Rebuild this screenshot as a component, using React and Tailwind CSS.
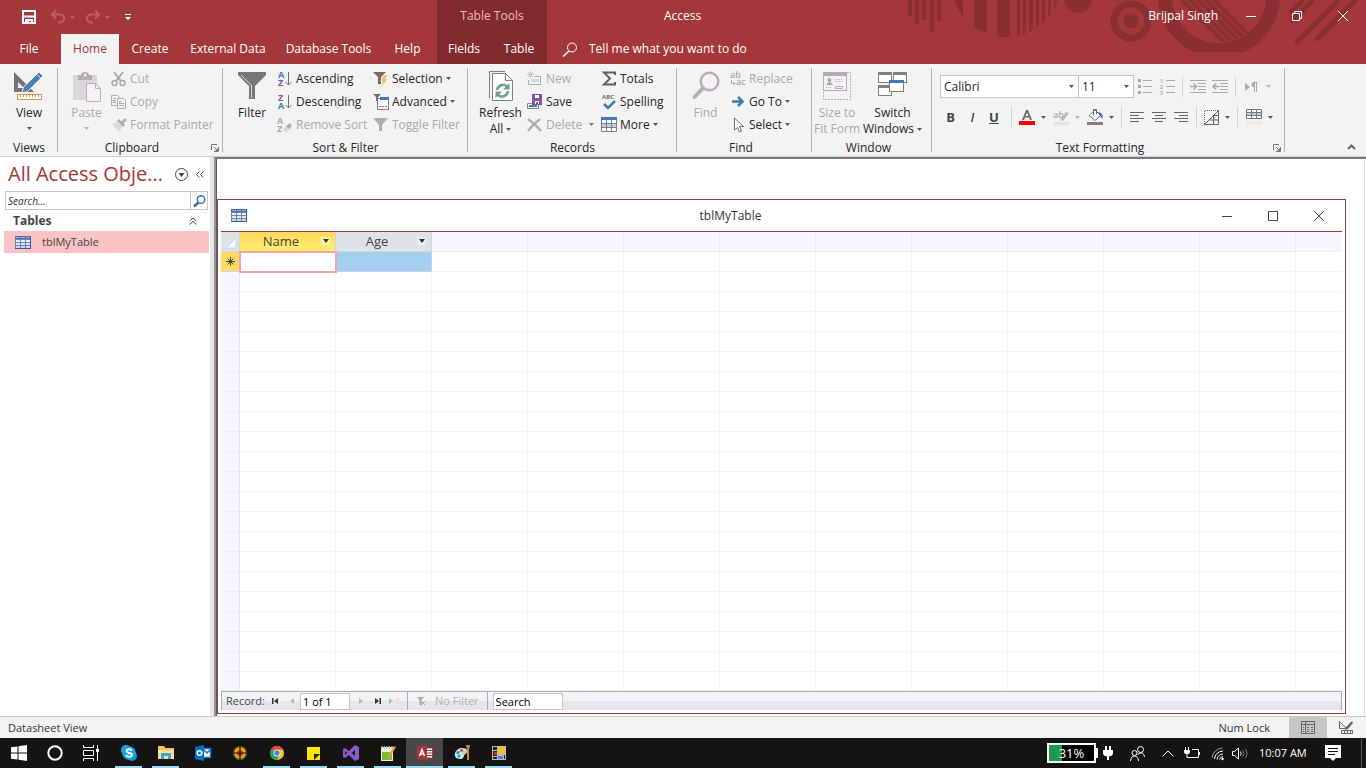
import React from "react";

const S = ({ w = 16, h = 16, children, className = "" }) => (
  <svg width={w} height={h} viewBox={`0 0 ${w} ${h}`} fill="none" aria-hidden="true" className={`block shrink-0 overflow-visible ${className}`}>
    {children}
  </svg>
);

const Caret = ({ color = "#555" }) => (
  <S w={5} h={3}><path d="M0 0h5L2.500 3z" fill={color} /></S>
);

const TableGlyph = () => (
  <S w={16} h={13}>
    <rect width="16" height="13" fill="#6f86b3" />
    <rect width="16" height="3" fill="#4f6ca6" />
    <path d="M1 1h4v1H1zM6 1h4v1H6zM11 1h4v1h-4z" fill="#9db2da" />
    <path d="M1 4h4v2H1zM6 4h4v2H6zM11 4h4v2h-4z" fill="#eef3fb" />
    <path d="M1 7h4v2H1zM6 7h4v2H6zM11 7h4v2h-4z" fill="#dde6f5" />
    <path d="M1 10h4v2H1zM6 10h4v2H6zM11 10h4v2h-4z" fill="#c9d6ee" />
    <path d="M15.500 0v13M0 12.500h16" stroke="#3f5787" />
  </S>
);

/* ---------- ribbon building blocks ---------- */

function Group({ label, className = "", labelClass = "", launcher, children }) {
  return (
    <section aria-label={label} className={`relative flex shrink-0 flex-col ${className}`}>
      <div className="flex h-[73px] items-start">{children}</div>
      <div className={`h-4 text-center leading-4 ${launcher ? "pr-[17px]" : labelClass}`}>{label}</div>
      {launcher && (
        <button type="button" aria-label={`${label} options`} className="absolute right-[4px] bottom-[4px]">
          <S w={8} h={8}>
            <path d="M.5 6V.5H6" stroke="#777" />
            <path d="M3 3l3 3" stroke="#777" />
            <path d="M7.500 3v4.500H3" stroke="#777" />
            <path d="M7 4v3H4z" fill="#777" />
          </S>
        </button>
      )}
      <span className="absolute top-[1px] right-0 h-[84px] w-px bg-[#b4b4b4]" />
    </section>
  );
}

function Small({ icon, label, disabled, caret, gap }) {
  return (
    <button type="button" disabled={disabled} className={`flex h-[23px] items-center gap-[3px] whitespace-nowrap ${disabled ? "text-[#a9a9a9]" : ""}`}>
      {icon}
      <span>{label}</span>
      {caret && <span className={gap || ""}><Caret color={caret} /></span>}
    </button>
  );
}

function Big({ icon, lines, disabled, caret, inline, className }) {
  return (
    <button type="button" disabled={disabled} className={`flex shrink-0 flex-col items-center whitespace-nowrap leading-4 ${disabled ? "text-[#a9a9a9]" : ""} ${className}`}>
      <span className="flex h-[38px] items-start pt-[4px]">{icon}</span>
      {lines.map((l, i) => (
        <span key={l} className="flex items-center gap-[3px]">
          {l}
          {inline && i === lines.length - 1 && <Caret />}
        </span>
      ))}
      {caret && <span className="pt-[6px]"><Caret color={caret} /></span>}
    </button>
  );
}

const Divider = () => <span className="mx-[7px] h-5 w-px shrink-0 bg-[#d2d2d2]" />;

/* ---------- ribbon icons ---------- */

const ViewIcon = () => (
  <S w={30} h={30}>
    <path fillRule="evenodd" d="M0 1l20 20H0zM4 11v6h6z" fill="#737373" />
    <path d="M8 22l1.500-6L25 1l4 4-15.500 15.500z" fill="#4a7ebb" stroke="#f3f3f3" />
    <path d="M23 3.500l3.500 3.500" stroke="#f3f3f3" />
    <rect x="3.500" y="23.500" width="24" height="5" fill="#fff" stroke="#e0914a" />
    <path d="M6.500 24v2M9.500 24v2M12.500 24v2M15.500 24v2M18.500 24v2M21.500 24v2M24.500 24v2" stroke="#e0914a" />
  </S>
);
const PasteIcon = () => (
  <S w={28} h={31}>
    <rect y="4" width="24" height="25" fill="#dbd6db" />
    <path d="M5 4h3a4 3 0 018 0h3v5H5z" fill="#b1adb1" />
    <circle cx="12" cy="4" r="1.500" fill="#f3f3f3" />
    <path d="M13.500 12.500h9l5 5v13h-14z" fill="#f7f1f8" stroke="#b5b1b5" />
    <path d="M22.500 12.500v5h5" stroke="#b5b1b5" />
  </S>
);
const FilterBig = () => (
  <S w={28} h={29}>
    <path d="M0 1h28v3L17 15v13h-6V15L0 4z" fill="#767676" />
    <path d="M3 4l10.500 10.500v12" stroke="#d8d8d8" />
  </S>
);
const RefreshIcon = () => (
  <S w={24} h={30}>
    <path d="M.5 27V.5H16" stroke="#808080" />
    <path d="M3.500 2.500h13l7 7v20h-20z" fill="#fff" stroke="#808080" />
    <path d="M16.500 2.500v7h7" stroke="#808080" />
    <path d="M8 19a6 6 0 0110-3.500M19 20a6 6 0 01-10 4" stroke="#68a58b" strokeWidth="2.500" />
    <path d="M20.500 12v6.500H14zM6.500 27v-6.500H13z" fill="#68a58b" />
  </S>
);
const FindIcon = () => (
  <S w={28} h={29}>
    <circle cx="17.500" cy="10.500" r="8.800" fill="#f7f2f7" stroke="#b3b0b3" strokeWidth="2.400" />
    <path d="M11 17L2.500 26" stroke="#b3b0b3" strokeWidth="4" strokeLinecap="round" />
  </S>
);
const SizeIcon = () => (
  <S w={28} h={30}>
    <path d="M24 1.500h3.500v27H.5V21" stroke="#b7b3b7" strokeDasharray="2 1" />
    <rect x=".5" y="1.500" width="23" height="18" fill="#f6f0f7" stroke="#b1adb1" />
    <path d="M0 1h24v4H0z" fill="#b1adb1" />
    <circle cx="6.500" cy="9" r="2" fill="#aaa" />
    <path d="M3 14q3.500-6 7 0z" fill="#aaa" />
    <path d="M12 8.500h8M12 10.500h8M3 16.500h6" stroke="#b7b3b7" strokeDasharray="1 1" />
    <path d="M12.500 15.500h7v2h-7z" stroke="#b1adb1" />
  </S>
);
const SwitchIcon = () => (
  <S w={29} h={27}>
    <rect x=".5" y="1.500" width="13" height="10" fill="#fff" stroke="#808080" /><path d="M0 1h14v3H0z" fill="#808080" />
    <rect x="15.500" y="1.500" width="13" height="10" fill="#fff" stroke="#808080" /><path d="M15 1h14v3H15z" fill="#808080" />
    <rect x=".5" y="14.500" width="13" height="10" fill="#fff" stroke="#808080" /><path d="M0 14h14v3H0z" fill="#808080" />
    <rect x="11.500" y="10.500" width="14" height="10" fill="#fff" stroke="#808080" /><path d="M11 9h15v3H11z" fill="#3f79bb" />
  </S>
);
const CutIcon = () => (
  <S>
    <path d="M3 1l7 9M12 1L5 10" stroke="#a9a9a9" strokeWidth="2" />
    <circle cx="3.500" cy="12" r="2.500" stroke="#a9a9a9" strokeWidth="1.500" />
    <circle cx="11.500" cy="12" r="2.500" stroke="#a9a9a9" strokeWidth="1.500" />
  </S>
);
const CopyIcon = () => (
  <S>
    <path d="M.5 1.500h6l2 2v8h-8z" fill="#f7f2f7" stroke="#b0adb0" />
    <path d="M2 4.500h3M2 6.500h3M2 8.500h3" stroke="#b0adb0" />
    <path d="M6.500 4.500h6l2 2v8h-8z" fill="#f7f2f7" stroke="#b0adb0" />
    <path d="M8 7.500h3M8 9.500h5M8 11.500h5" stroke="#b0adb0" />
  </S>
);
const PainterIcon = () => (
  <S>
    <path d="M1 7l5-2 5 5-3 5z" fill="#dcd8dc" />
    <path d="M6 4l2-2 6 6-2 2z" fill="#b0adb0" />
    <path d="M10 5l4-4 2 2-4 4z" fill="#b0adb0" />
  </S>
);
const SortIcon = ({ a, b, ca, cb }) => (
  <S>
    <text x="1" y="7" fontSize="9" fontWeight="700" fill={ca}>{a}</text>
    <text x="1" y="15" fontSize="9" fontWeight="700" fill={cb}>{b}</text>
    <path d="M11.500 1v13M8.500 11l3 3 3-3" stroke="#6d6d6d" />
  </S>
);
const RemoveSort = () => (
  <S>
    <text y="7" fontSize="9" fontWeight="700" fill="#a9a9a9">A</text>
    <text y="15" fontSize="9" fontWeight="700" fill="#a9a9a9">Z</text>
    <path d="M6 12l4-4 4 3-4 4H8z" fill="#dcd8dc" />
    <path d="M9 9l4-3 2 3-3 3z" fill="#b0adb0" />
  </S>
);
const SelectionIcon = () => (
  <S>
    <path d="M0 1h13L8 6v7H5V6z" fill="#6d6d6d" />
    <path d="M11 4h4l-3 4h3l-7 8 2-6H7z" fill="#e9bd7c" stroke="#f3f3f3" strokeWidth=".5" />
  </S>
);
const AdvancedIcon = () => (
  <S>
    <path d="M0 0h8L5 3v4H3V3z" fill="#6d6d6d" />
    <rect x="4.500" y="4.500" width="11" height="11" fill="#fff" stroke="#808080" />
    <path d="M7 3h9v3H7z" fill="#3f79bb" />
    <path d="M6 12.500h2m1 0h2m1 0h2" stroke="#808080" />
  </S>
);
const ToggleIcon = () => (
  <S><path d="M0 1h15L9 8v6H6V8z" fill="#b0adb0" /></S>
);
const NewIcon = () => (
  <S>
    <path d="M3.500 0v7M0 3.500h7M1 1l5 5M6 1L1 6" stroke="#c5c2c5" />
    <path d="M7 5.500h6.500v8H1.500V9" stroke="#b0adb0" />
    <path d="M4 8h8v3H4z" fill="#d8d4d8" />
  </S>
);
const SaveIcon = () => (
  <S>
    <path d="M.5 9.500h11v5H.5z" fill="#fff" stroke="#808080" /><path d="M2 11h8v2H2z" fill="#3f79bb" />
    <path d="M5 0h10v11H5z" fill="#8553a5" />
    <path d="M8 1h4v3H8zM8 7h4v3H8z" fill="#fff" /><path d="M9 8h2v2H9z" fill="#8553a5" />
  </S>
);
const DeleteIcon = () => (
  <S><path d="M1 2q7 5 13 12M13 2Q6 7 1 14" stroke="#b0adb0" strokeWidth="2.200" /></S>
);
const SigmaIcon = () => (
  <S><path d="M14 4V1.500H3L9 7.500 3 13.500h11V11" stroke="#5f5f5f" strokeWidth="2" /></S>
);
const SpellIcon = () => (
  <S>
    <text x="1" y="5" fontSize="6" fontWeight="700" fill="#6d6d6d">ABC</text>
    <path d="M3 10l4 4 7-7" stroke="#3f79bb" strokeWidth="2.500" />
  </S>
);
const GridIcon = () => (
  <S h={15}>
    <path d="M.5.5h15v14H.5z" fill="#fff" stroke="#808080" />
    <path d="M1 6h14v5H1z" fill="#bcd0e6" />
    <path d="M5.500 3v12M10.500 3v12M0 6.500h16M0 10.500h16" stroke="#808080" />
    <path d="M0 0h16v3H0z" fill="#3f79bb" />
  </S>
);
const ReplaceIcon = () => (
  <S>
    <text y="7" fontSize="9" fontWeight="600" fill="#a9a9a9">ab</text>
    <text x="6" y="14" fontSize="9" fontWeight="600" fill="#a9a9a9">ac</text>
    <path d="M1.500 9v3.500H5M3.500 11l1.500 1.500L3.500 14" stroke="#a9a9a9" />
  </S>
);
const GoToIcon = () => (
  <S><path d="M2 7.500h10M8 3l4.500 4.500L8 12" stroke="#3f79bb" strokeWidth="2.500" /></S>
);
const PointerIcon = () => (
  <S><path d="M4.500 1v12l3-2.500 2 4.500 2-1-2-4.500h4z" fill="#fff" stroke="#6d6d6d" /></S>
);

const AlignLines = ({ d }) => (
  <S w={15} h={13}><path d={d} stroke="#666" /></S>
);

function Ribbon() {
  const gray = "#a9a9a9";
  return (
    <div className="flex shrink-0 border-b border-[#d0d0d0] bg-[#f3f3f3] pt-[3px] text-[#262626]">
      <Group label="Views" className="w-[58px]">
        <Big className="w-[58px]" icon={<ViewIcon />} lines={["View"]} caret="#555" />
      </Group>
      <Group label="Clipboard" className="w-[165px]" launcher>
        <Big className="w-[53px] pl-[4px]" disabled icon={<PasteIcon />} lines={["Paste"]} caret="#b5b5b5" />
        <div className="flex flex-col">
          <Small disabled icon={<CutIcon />} label="Cut" />
          <Small disabled icon={<CopyIcon />} label="Copy" />
          <Small disabled icon={<PainterIcon />} label="Format Painter" />
        </div>
      </Group>
      <Group label="Sort & Filter" className="w-[245px]">
        <Big className="w-[54px] pl-[4px]" icon={<FilterBig />} lines={["Filter"]} />
        <div className="flex w-[96px] shrink-0 flex-col">
          <Small icon={<SortIcon a="A" b="Z" ca="#3f79bb" cb="#8553a5" />} label="Ascending" />
          <Small icon={<SortIcon a="Z" b="A" ca="#8553a5" cb="#3f79bb" />} label="Descending" />
          <Small disabled icon={<RemoveSort />} label="Remove Sort" />
        </div>
        <div className="flex flex-col">
          <Small icon={<SelectionIcon />} label="Selection" caret="#555" />
          <Small icon={<AdvancedIcon />} label="Advanced" caret="#555" />
          <Small disabled icon={<ToggleIcon />} label="Toggle Filter" />
        </div>
      </Group>
      <Group label="Records" className="w-[209px]">
        <Big className="w-[59px] pl-[6px]" inline icon={<RefreshIcon />} lines={["Refresh", "All"]} />
        <div className="flex w-[74px] shrink-0 flex-col">
          <Small disabled icon={<NewIcon />} label="New" />
          <Small icon={<SaveIcon />} label="Save" />
          <Small disabled icon={<DeleteIcon />} label="Delete" caret="#777" gap="pl-[4px]" />
        </div>
        <div className="flex flex-col">
          <Small icon={<SigmaIcon />} label="Totals" />
          <Small icon={<SpellIcon />} label="Spelling" />
          <Small icon={<GridIcon />} label="More" caret="#555" />
        </div>
      </Group>
      <Group label="Find" className="w-[135px]" labelClass="pr-[7px]">
        <Big className="w-[53px] pl-[4px]" disabled icon={<FindIcon />} lines={["Find"]} />
        <div className="flex flex-col">
          <Small disabled icon={<ReplaceIcon />} label="Replace" />
          <Small icon={<GoToIcon />} label="Go To" caret="#555" />
          <Small icon={<PointerIcon />} label="Select" caret="#555" />
        </div>
      </Group>
      <Group label="Window" className="w-[120px]" labelClass="pr-[7px]">
        <Big className="w-[50px]" disabled icon={<SizeIcon />} lines={["Size to", "Fit Form"]} />
        <Big className="w-[61px]" inline icon={<SwitchIcon />} lines={["Switch", "Windows"]} />
      </Group>
      <Group label="Text Formatting" className="w-[353px]" launcher>
        <div className="flex w-full flex-col gap-[8px] pt-[8px] pl-[8px]">
          <div className="flex h-[23px] items-center">
            <label className="relative flex h-full w-[139px] items-center">
              <select aria-label="Font" className="h-full w-full appearance-none border border-[#c6c6c6] bg-white pl-[3px] outline-none">
                <option>Calibri</option>
              </select>
              <span className="pointer-events-none absolute right-[5px]"><Caret /></span>
            </label>
            <label className="relative -ml-px flex h-full w-[56px] items-center">
              <select aria-label="Font size" className="h-full w-full appearance-none border border-[#c6c6c6] bg-white pl-[3px] outline-none">
                <option>11</option>
              </select>
              <span className="pointer-events-none absolute right-[5px]"><Caret /></span>
            </label>
            <button type="button" aria-label="Bullets" disabled className="ml-[4px]">
              <S w={14} h={15}><path d="M5 1.500h9M5 7.500h9M5 13.500h9" stroke={gray} /><path d="M0 0h3v3H0zM0 6h3v3H0zM0 12h3v3H0z" fill={gray} /></S>
            </button>
            <button type="button" aria-label="Numbering" disabled className="ml-[8px]">
              <S w={15} h={15}><path d="M6 1.500h9M6 7.500h9M6 13.500h9" stroke={gray} /><text y="4" fontSize="5" fontWeight="700" fill={gray}>1</text><text y="10" fontSize="5" fontWeight="700" fill={gray}>2</text><text y="16" fontSize="5" fontWeight="700" fill={gray}>3</text></S>
            </button>
            <Divider />
            <button type="button" aria-label="Increase indent" disabled>
              <S h={13}><path d="M0 .5h16M8 3.500h8M8 6.500h8M8 9.500h8M0 12.500h16" stroke={gray} /><path d="M0 6.500h6M3.500 3.500l3 3-3 3" stroke={gray} strokeWidth="1.500" /></S>
            </button>
            <button type="button" aria-label="Decrease indent" disabled className="ml-[6px]">
              <S h={13}><path d="M0 .5h16M8 3.500h8M8 6.500h8M8 9.500h8M0 12.500h16" stroke={gray} /><path d="M1 6.500h6M4 3.500l-3 3 3 3" stroke={gray} strokeWidth="1.500" /></S>
            </button>
            <Divider />
            <button type="button" aria-label="Text direction" disabled className="flex items-center gap-[8px] pl-[2px]">
              <S w={13} h={10}><path d="M0 1l5 4-5 4z" fill={gray} /><path d="M9 0a2.500 2.500 0 000 5z" fill={gray} /><path d="M8 .5h5M9.500 1v9M11.500 1v9" stroke={gray} /></S>
              <Caret color="#b5b5b5" />
            </button>
          </div>
          <div className="flex h-[22px] items-center text-[#444]">
            <button type="button" className="w-[21px] text-[13px] font-bold">B</button>
            <button type="button" className="w-[23px] text-[13px] font-semibold italic">I</button>
            <button type="button" className="w-[20px] text-[13px] font-bold underline">U</button>
            <Divider />
            <button type="button" aria-label="Font colour" className="flex items-center gap-[6px]">
              <S><path fillRule="evenodd" d="M3 11L7 1h2l4 10h-2l-1-2.500H6L5 11zM6.500 7h3L8 3.500z" fill="#6a6a6a" /><path d="M0 12h16v4H0z" fill="#f00" /></S>
              <Caret />
            </button>
            <button type="button" aria-label="Highlight" disabled className="ml-[7px] flex items-center gap-[6px]">
              <S><text y="9" fontSize="9" fontWeight="600" fill={gray}>ab</text><path d="M7 11l6-8 3 1-6 8z" fill="#bab6ba" /><path d="M0 13h16v3H0z" fill="#e6e1e7" /></S>
              <Caret color="#b5b5b5" />
            </button>
            <button type="button" aria-label="Fill colour" className="ml-[7px] flex items-center gap-[6px]">
              <S><path d="M2 6.500L8 1l5.500 5.500L8 11.500z" fill="#fff" stroke="#6d6d6d" /><path d="M6.500 6V.500h3V5" stroke="#6d6d6d" /><path d="M11 3q6 1 4.500 7L13 7z" fill="#3f79bb" /><path d="M0 13h16v3H0z" fill="#808080" /></S>
              <Caret />
            </button>
            <Divider />
            <button type="button" aria-label="Align left" className="pl-px"><AlignLines d="M0 1.500h14M0 4.500h9M0 7.500h14M0 10.500h9" /></button>
            <button type="button" aria-label="Centre" className="ml-[7px]"><AlignLines d="M0 1.500h14M3 4.500h8M0 7.500h14M3 10.500h8" /></button>
            <button type="button" aria-label="Align right" className="ml-[7px]"><AlignLines d="M0 1.500h14M5 4.500h9M0 7.500h14M5 10.500h9" /></button>
            <Divider />
            <button type="button" aria-label="Gridlines" className="flex items-center gap-[6px]">
              <S w={15} h={15}><path d="M.5 14V.5H14" stroke="#666" strokeDasharray="1 1" /><path d="M0 15L14.500.5V14.500H0M9.500 6v9M5.500 10h9M10 5.500h5" stroke="#666" /></S>
              <Caret />
            </button>
            <Divider />
            <button type="button" aria-label="Alternate row colour" className="flex items-center gap-[6px] pl-px">
              <S><path d="M.5.5h15v9H.5z" fill="#fff" stroke="#777" /><path d="M1 3h14v4H1z" fill="#bcd0e6" /><path d="M5.500 0v10M10.500 0v10M0 3.500h16M0 6.500h16" stroke="#777" /><path d="M0 12h16v4H0z" fill="#ebebeb" /></S>
              <Caret />
            </button>
          </div>
        </div>
      </Group>
      <div className="flex flex-1 items-end justify-end pr-[10px] pb-[6px]">
        <button type="button" aria-label="Collapse the ribbon">
          <S w={9} h={6}><path d="M1 5l3.500-3.500L8 5" stroke="#666" strokeWidth="2" /></S>
        </button>
      </div>
    </div>
  );
}

/* ---------- header ---------- */

const dark = "#8b2e32";

function HeaderArt() {
  return (
    <svg width="466" height="64" viewBox="0 0 466 64" aria-hidden="true" className="pointer-events-none absolute top-0 right-0">
      <defs>
        <clipPath id="disc"><circle cx="106" cy="-18" r="55" /></clipPath>
        <clipPath id="band"><rect width="466" height="52" /></clipPath>
        <clipPath id="hole"><circle cx="319" cy="-6" r="48" /></clipPath>
      </defs>
      <path fill={dark} d="M8 0h4v16H8zM15 0h4v24h-4zM22 0h4v20h-4zM30 0h4v32h-4zM37 0h4v21h-4z" />
      <path clipPath="url(#disc)" fill={dark} d="M51 0h12v40H51zM74 0h13v40H74zM97 0h13v40H97zM117 0h3v40h-3zM123 0h3v40h-3zM129 0h4v40h-4zM136 0h3v40h-3zM142 0h3v40h-3zM148 0h3v40h-3zM154 0h3v40h-3z" />
      <circle cx="178" cy="-1" r="14" fill={dark} />
      <circle cx="231" cy="21" r="17" fill="none" stroke={dark} strokeWidth="7" />
      <circle cx="231" cy="21" r="7.500" fill={dark} />
      <g clipPath="url(#band)">
        <circle cx="319" cy="-4" r="54" fill="none" stroke={dark} strokeWidth="14" />
        <g clipPath="url(#hole)" stroke={dark} strokeWidth="4">
          <path d="M262-20l80 80M270-20l80 80M278-20l80 80M286-20l80 80M294-20l80 80" />
        </g>
      </g>
      <path d="M390 13l13-13M391 22l22-22M396 43l43-43M416 40l40-40" stroke={dark} strokeWidth="5" />
    </svg>
  );
}

const Tab = ({ children, className }) => (
  <button type="button" className={`flex h-[30px] items-center justify-center whitespace-nowrap ${className}`}>{children}</button>
);

function Header() {
  return (
    <header className="relative flex h-16 shrink-0 bg-[#a4373a] text-white">
      <HeaderArt />
      <div className="flex w-[437px] shrink-0 flex-col">
        <div className="flex h-[34px] items-center pl-[22px]">
          <button type="button" aria-label="Save"><S w={14} h={14}><path d="M1 1h12v12H1zM2 6.500h10M4 13v-3h6v3" stroke="#fff" strokeWidth="2" /><path d="M5 11h2v2H5z" fill="#fff" /></S></button>
          <button type="button" disabled aria-label="Undo" className="ml-[15px] flex items-center gap-[5px]">
            <S w={14} h={14}><path d="M1 4.500h8a4 4 0 010 8H7M5 .5l-4 4 4 4" stroke="#be5f61" strokeWidth="2" /></S><Caret color="#be5f61" />
          </button>
          <button type="button" disabled aria-label="Redo" className="ml-[11px] flex items-center gap-[5px]">
            <S w={14} h={14}><path d="M13 4.500H5a4 4 0 000 8h2M9 .5l4 4-4 4" stroke="#be5f61" strokeWidth="2" /></S><Caret color="#be5f61" />
          </button>
          <button type="button" aria-label="Customize toolbar" className="ml-[15px]"><S w={6} h={6}><path d="M0 .5h6" stroke="#fff" /><path d="M0 3h6L3 6z" fill="#fff" /></S></button>
        </div>
        <nav className="flex" aria-label="Ribbon tabs">
          <Tab className="mr-[3px] w-[58px]">File</Tab>
          <Tab className="w-[58px] bg-[#f3f3f3] text-[#a4373a]">Home</Tab>
          <Tab className="w-[62px]">Create</Tab>
          <Tab className="w-[94px]">External Data</Tab>
          <Tab className="w-[107px]">Database Tools</Tab>
          <Tab className="w-[51px]">Help</Tab>
        </nav>
      </div>
      <div className="flex w-[110px] shrink-0 flex-col bg-[#812b2e]">
        <div className="flex h-[34px] items-center justify-center pb-[2px] text-[#efb9ba]">Table Tools</div>
        <div className="flex">
          <Tab className="w-[54px]">Fields</Tab>
          <Tab className="w-[56px]">Table</Tab>
        </div>
      </div>
      <div className="relative flex flex-1 flex-col">
        <div className="flex h-[34px] items-center pb-[2px] pl-[117px]">
          <h1>Access</h1>
          <span className="ml-auto">Brijpal Singh</span>
          <button type="button" aria-label="Minimize" className="ml-[28px]"><S w={10} h={10}><path d="M0 5.500h10" stroke="#fff" /></S></button>
          <button type="button" aria-label="Restore" className="ml-[36px]"><S w={10} h={10}><path d="M.5 2.500h7v7h-7zM2.500 2V.5h7v7H8" stroke="#fff" /></S></button>
          <button type="button" aria-label="Close" className="mr-[18px] ml-[36px]"><S w={10} h={10}><path d="M0 0l10 10M10 0L0 10" stroke="#fff" /></S></button>
        </div>
        <label className="flex h-[30px] items-center gap-[12px] pl-[16px]">
          <S w={14} h={15}><circle cx="9" cy="5.500" r="4.500" stroke="#fff" /><path d="M6 9L0 14.500" stroke="#fff" strokeWidth="1.500" /></S>
          <input aria-label="Tell me what you want to do" placeholder="Tell me what you want to do" className="w-[200px] bg-transparent outline-none placeholder:text-white" />
        </label>
      </div>
    </header>
  );
}

/* ---------- navigation pane ---------- */

function NavPane() {
  return (
    <aside className="flex w-[210px] shrink-0 flex-col bg-white">
      <div className="flex h-[34px] items-center pr-[5px] pl-[8px]">
        <h2 className="w-[167px] text-[20px] leading-[30px] whitespace-nowrap text-[#a4373a]">All Access Obje...</h2>
        <button type="button" aria-label="Object filter"><S w={13} h={13}><circle cx="6.500" cy="6.500" r="6" stroke="#444" /><path d="M3.500 5h6l-3 4z" fill="#444" /></S></button>
        <button type="button" aria-label="Collapse pane" className="ml-[8px]"><S w={8} h={7}><path d="M3.500.5l-3 3 3 3M7.500.5l-3 3 3 3" stroke="#444" /></S></button>
      </div>
      <div className="mr-[2px] ml-[5px] flex h-[19px] border border-[#c6c6c6]">
        <input aria-label="Search" placeholder="Search..." className="min-w-0 flex-1 pl-[2px] text-[10px] italic outline-none placeholder:text-[#333]" />
        <button type="button" aria-label="Find objects" className="flex w-[17px] items-center justify-center border-l border-[#c6c6c6]">
          <S w={13} h={12}><circle cx="8" cy="4.500" r="3.800" stroke="#3a6ea8" strokeWidth="1.400" /><path d="M5.500 7.500L1 11.500" stroke="#3a6ea8" strokeWidth="2.500" /></S>
        </button>
      </div>
      <button type="button" className="flex h-[21px] items-center justify-between pr-[13px] pl-[13px] font-bold text-[#444]">
        Tables
        <S w={8} h={8}><path d="M.5 4L4 1l3.500 3M.5 7.500l3.500-3 3.500 3" stroke="#444" /></S>
      </button>
      <button type="button" className="mr-px ml-[4px] flex h-[22px] items-center gap-[11px] bg-[#fcc3c5] pl-[11px] text-[11px] text-[#444]">
        <TableGlyph />
        tblMyTable
      </button>
    </aside>
  );
}

/* ---------- datasheet ---------- */

const columns = Array.from({ length: 11 }, (_, i) => i);
const emptyRows = Array.from({ length: 21 }, (_, i) => i);

function HeadCell({ label, className }) {
  return (
    <th scope="col" className={`border-r border-b border-[#d0d7e0] p-0 align-top font-normal text-[#444] ${className}`}>
      <div className="flex h-[18px] items-center pr-[5px]">
        <span className="flex-1 pl-px text-center text-[13px] leading-[18px]">{label}</span>
        <button type="button" aria-label={`${label} options`} className="bg-white/40 px-px py-[2px]"><S w={7} h={4}><path d="M1 0h6L4 4z" fill="#333" /></S></button>
      </div>
    </th>
  );
}

function Datasheet() {
  return (
    <table className="w-full table-fixed border-separate border-spacing-0">
      <colgroup>
        <col className="w-[19px]" />
        {columns.map((c) => <col key={c} className="w-[96px]" />)}
        <col />
      </colgroup>
      <thead>
        <tr className="h-5">
          <th className="border-r border-b border-[#d0d7e0] bg-[#dfe3e8] p-0" aria-label="Select all">
            <S w={18} h={18}><path d="M15 5v10H5z" fill="#f8fafc" stroke="#b9c6d3" strokeWidth=".6" /></S>
          </th>
          <HeadCell label="Name" className="bg-linear-to-b from-[#ffd75e] to-[#fff070]" />
          <HeadCell label="Age" className="bg-[#dfe3e8]" />
          {columns.slice(2).map((c) => <td key={c} className="border-r border-b border-[#e9e9f3] bg-[#f6f6fe] p-0" />)}
          <td className="border-b border-[#efeff5] bg-[#f6f6fe] p-0" />
        </tr>
      </thead>
      <tbody>
        <tr className="h-5">
          <td className="border-r border-b border-[#d0d7e0] bg-[#ffdb62] p-0">
            <S w={18} h={19}><path d="M9.500 5v9M5 9.500h9M6.500 6.500l6 6M12.500 6.500l-6 6" stroke="#444" /></S>
          </td>
          <td className="bg-white p-0 outline-2 -outline-offset-1 outline-[#f5a5a8]"><input aria-label="Name" className="block h-[19px] w-full bg-transparent px-1 outline-none" /></td>
          <td className="border-r border-b border-[#c4d4e4] bg-[#a5cff1] p-0"><input aria-label="Age" className="block h-[19px] w-full bg-transparent px-1 outline-none" /></td>
          {columns.slice(2).map((c) => <td key={c} className="border-r border-b border-[#f3f3f5] p-0" />)}
          <td className="border-b border-[#f3f3f5] p-0" />
        </tr>
        {emptyRows.map((r) => (
          <tr key={r} className="h-5 last:h-[19px]">
            <td className="border-r border-b border-r-[#e4e7f0] border-b-[#ececf4] bg-[#f6f6fe] p-0" />
            {columns.map((c) => <td key={c} className="border-r border-b border-[#f3f3f5] p-0" />)}
            <td className="border-b border-[#f3f3f5] p-0" />
          </tr>
        ))}
      </tbody>
    </table>
  );
}

const Nav = ({ label, d, color, w = 7, className = "" }) => (
  <button type="button" aria-label={label} className={className}><S w={w} h={8}><path d={d} fill={color} /></S></button>
);

function RecordBar() {
  return (
    <div className="flex h-[19px] items-center border-t border-r border-l border-[#a9afb7] bg-[linear-gradient(#f3f4f6_50%,#e4e6ea_50%)] pl-[4px] text-[11px] text-[#444]">
      <span className="w-[46px]">Record:</span>
      <Nav label="First record" d="M0 1h1.500v6H0zM6 1v6L2 4z" color="#333" />
      <Nav label="Previous record" d="M5 1v6L1 4z" color="#b9b9b9" className="ml-[10px]" />
      <input aria-label="Current record" defaultValue="1 of 1" className="ml-[4px] h-[17px] w-[50px] border border-[#c6c6c6] bg-white pl-[2px] text-black outline-none" />
      <Nav label="Next record" d="M2 1v6l4-3z" color="#b9b9b9" className="ml-[7px]" />
      <Nav label="Last record" d="M1 1v6l4-3zM5.500 1H7v6H5.500z" color="#333" className="ml-[10px]" />
      <button type="button" aria-label="New record" className="ml-[8px]"><S w={12} h={8}><path d="M0 1v6l4-3z" fill="#b9b9b9" /><path d="M8.500 0v8M4.500 4h8M6 1l5 6M11 1L6 7" stroke="#f1dfc8" /></S></button>
      <span className="ml-[6px] h-full w-px bg-[#a9afb7]" />
      <button type="button" disabled className="flex items-center gap-[9px] pl-[9px] text-[#b0b0b0]">
        <S w={9} h={9}><path d="M0 0h7L4.500 3v5h-2V3z" fill="#aaa" /><path d="M4 4l4 4M8 4L4 8" stroke="#aaa" /></S>
        No Filter
      </button>
      <span className="ml-[8px] h-full w-px bg-[#a9afb7]" />
      <input aria-label="Search records" defaultValue="Search" className="ml-[5px] h-[17px] w-[70px] border border-[#c6c6c6] bg-white pl-[2px] text-black outline-none" />
    </div>
  );
}

function TableWindow() {
  return (
    <section aria-label="tblMyTable" className="mr-[20px] border border-[#9b3c40] px-[3px] pb-[3px]">
      <div className="flex h-8 items-center border-b border-[#9b3c40] pl-[10px]">
        <TableGlyph />
        <h2 className="flex-1 pr-[8px] text-center text-[#333]">tblMyTable</h2>
        <div className="flex items-center gap-[36px] pr-[18px]">
          <button type="button" aria-label="Minimize table"><S w={10} h={10}><path d="M0 5.500h10" stroke="#444" /></S></button>
          <button type="button" aria-label="Maximize table"><S w={10} h={10}><path d="M.5.5h9v9h-9z" stroke="#444" /></S></button>
          <button type="button" aria-label="Close table"><S w={10} h={10}><path d="M0 0l10 10M10 0L0 10" stroke="#444" /></S></button>
        </div>
      </div>
      <Datasheet />
      <RecordBar />
    </section>
  );
}

/* ---------- status bar and taskbar ---------- */

function StatusBar() {
  return (
    <div className="flex h-[22px] shrink-0 items-center border-t border-[#c8c8c8] bg-[#f3f3f3] pl-[8px] text-[11px] text-[#333]">
      <span>Datasheet View</span>
      <span className="mr-[19px] ml-auto">Num Lock</span>
      <button type="button" aria-label="Datasheet view" className="flex h-full w-[38px] items-center justify-center bg-[#c6c6c6]">
        <S w={14} h={13}><path d="M.5.5h13v12H.5zM0 3.500h14M4.500 1v12M6 6.500h2m2 0h2M6 8.500h2m2 0h2M6 10.500h2m2 0h2M2 6.500h1M2 8.500h1M2 10.500h1" stroke="#666" /></S>
      </button>
      <button type="button" aria-label="Design view" className="flex h-full w-[39px] items-center justify-center">
        <S w={15} h={13}><path d="M.5 7.500v-7l7 7z" stroke="#666" /><path d="M13 0L7 6l-1 3 3-1 5-6z" fill="#666" /><path d="M2.500 9.500h11v3h-11zM5.500 10v2M8.500 10v2M11.500 10v2" stroke="#666" /></S>
      </button>
    </div>
  );
}

const apps = [
  { name: "Start", w: "w-[37px]", icon: <S><path d="M0 2.300l6.500-.9v6.100H0zM7.500 1.200L16 0v7.500H7.500zM0 8.500h6.500v6.100L0 13.700zM7.500 8.500H16V16l-8.500-1.200z" fill="#fff" /></S> },
  { name: "Cortana", w: "w-[35px]", icon: <S><circle cx="8" cy="8" r="6.700" stroke="#fff" strokeWidth="2" /></S> },
  { name: "Task view", w: "w-[38px]", icon: <S><path d="M.5 0v2.500h10V0M.5 5.500h10v5H.5zM.5 16v-2.500h10V16M14.500 0v16" stroke="#fff" /><path d="M13 4h3v3h-3z" fill="#fff" /></S> },
  { name: "Skype", run: true, icon: <S><circle cx="5" cy="5" r="5" fill="#12a5ef" /><circle cx="11" cy="11" r="5" fill="#0a8ee0" /><circle cx="8" cy="8" r="6.800" fill="#12a5ef" /><path d="M11 5.500Q8 3.500 6 5q-1.500 2 2 3 4 .8 2.500 3-2.500 1.600-5.500-.5" stroke="#fff" strokeWidth="2" /></S> },
  { name: "File Explorer", run: true, icon: <S><path d="M0 1h6l1.500 2H16v11H0z" fill="#f5c453" /><path d="M0 5h16v9H0z" fill="#fde08d" /><path d="M3 14V8h10v6h-3v-3H6v3z" fill="#38a3dc" /></S> },
  { name: "Outlook", icon: <S><path d="M8 3h8v10H8z" fill="#fff" /><path d="M8 3.500h7.500v9H8M8 4l4 4 4-4" stroke="#1476c6" strokeWidth="1.500" /><path d="M0 2l9-2v16l-9-2z" fill="#0072c6" /><circle cx="4.500" cy="8" r="2.300" stroke="#fff" strokeWidth="1.500" /></S> },
  { name: "Target", icon: <S><circle cx="8" cy="8" r="7" fill="#5d7414" /><circle cx="8" cy="8" r="5.500" fill="#f5b80c" /><circle cx="8" cy="8" r="3.200" fill="#e32a12" /><path d="M8 0v16M0 8h16" stroke="#171109" strokeWidth="1.200" /></S> },
  { name: "Chrome", run: true, icon: <S><circle cx="8" cy="8" r="7" fill="#fbc116" /><path d="M8 8L1.900 4.500A7 7 0 0114.100 4.500L8 5z" fill="#e04a3a" /><path d="M1.900 4.500A7 7 0 008 15l2.500-5L8 8z" fill="#21a15a" /><circle cx="8" cy="8" r="3.500" fill="#fff" /><circle cx="8" cy="8" r="2.700" fill="#4b86ed" /></S> },
  { name: "Sticky Notes", run: true, icon: <S w={13} h={13}><path d="M0 0h13v13H0z" fill="#ffe500" /><path d="M7 7h6l-6 6z" fill="#222" /></S> },
  { name: "Visual Studio", run: true, icon: <S><path fillRule="evenodd" d="M12 0l4 2v12l-4 2-6-6-4 3-2-1V4l2-1 4 3zM12 5L8.500 8l3.500 3zM2 6v4l2-2z" fill="#8a5cc7" /></S> },
  { name: "Notepad++", run: true, icon: <S><path d="M1 2h12v14H1z" fill="#eaf3e0" /><path d="M2 7h10v8H2z" fill="#7dbb35" /><path d="M2 1v3M4.500 1v3M7 1v3M9.500 1v3M12 1v3" stroke="#bbb" /><path d="M14 1l2 1-6 10-2 1 .5-3z" fill="#e8a02b" /></S> },
  { name: "Access", run: true, active: true, icon: <S><path d="M8 3h7.500v10H8z" fill="#fff" stroke="#b8383c" /><path d="M10 5.500h5M10 8h5M10 10.500h5" stroke="#a4373a" /><path d="M0 2l10-2v16L0 14z" fill="#a4373a" /><path d="M2.500 11L5 4.500 7.500 11M3.500 9h3" stroke="#fff" strokeWidth="1.500" /></S> },
  { name: "Paint", run: true, icon: <S><path d="M8 3c5 0 6 3 4.500 5-1 1.500-2 1-2.500 2.500-.4 2-1 3.500-4 3.500-4 0-6-3-5-6s3.500-5 7-5z" fill="#c2e3f2" /><circle cx="4" cy="7.500" r="1.500" fill="#3b7ede" /><circle cx="7.500" cy="5.500" r="1.500" fill="#d8443b" /><circle cx="5" cy="11" r="1.500" fill="#3aa34b" /><circle cx="10" cy="7" r="1.300" fill="#e9b71f" /><path d="M14 5v10" stroke="#e38327" strokeWidth="2" /><path d="M12 0h4l-1 5h-2z" fill="#b68a58" /></S> },
  { name: "Form designer", run: true, icon: <S w={14} h={14}><path d="M0 0h14v14H0z" fill="#bbb" /><path d="M1 1h4v3H1zM1 11h4v2H1zM12 9h1v4h-1z" fill="#222" /><path d="M1 5h4v5H1z" fill="#222" /><path d="M2 6h3v3H2z" fill="#d22b2b" /><path d="M6 1h7v7H6z" fill="#f3c02e" /><path d="M6 10h5v3H6z" fill="#4b86ed" /></S> },
];

function Taskbar() {
  return (
    <footer className="flex h-[30px] shrink-0 items-center bg-[#151413] text-white">
      {apps.map((a) => (
        <button key={a.name} type="button" aria-label={a.name} className={`relative flex h-full shrink-0 items-center justify-center ${a.w || "w-[37px]"} ${a.active ? "bg-[#484848]" : ""}`}>
          {a.icon}
          {a.run && <span className={`absolute bottom-0 h-[2px] bg-[#9adcf7] ${a.active ? "inset-x-0" : "inset-x-[5px]"}`} />}
        </button>
      ))}
      <div className="ml-auto flex h-full items-center">
        <div className="flex h-5 w-[49px] items-center justify-center border-2 border-white bg-[linear-gradient(90deg,#1b9b4b_30%,#000_30%)] text-[13px] leading-4">31%</div>
        <span className="h-[10px] w-[2px] bg-white" />
        <S w={10} h={14} className="ml-[5px]"><path d="M2 0h2v4h2V0h2v4h2v3q0 3-4 3.500V14H4v-3.500Q0 10 0 7V4h2z" fill="#fff" /></S>
        <button type="button" aria-label="People" className="ml-[17px]"><S w={15} h={15}><circle cx="10.500" cy="3.500" r="3" stroke="#fff" /><circle cx="4.500" cy="7" r="2.500" stroke="#fff" /><path d="M.5 15Q1 10 4.500 10T8.500 15M7.500 8.500Q13.500 4 14.500 11" stroke="#fff" /></S></button>
        <button type="button" aria-label="Show hidden icons" className="ml-[17px]"><S w={12} h={7}><path d="M.5 6.500L6 1l5.500 5.500" stroke="#fff" /></S></button>
        <S w={16} h={12} className="ml-[10px]"><path d="M1.500 0v3M4.500 0v3M3 7v3.500h2" stroke="#fff" /><path d="M0 3h6v2q0 2-3 2T0 5z" fill="#fff" /><path d="M8 2.500h6.500v8H5M15.500 5v3" stroke="#fff" /></S>
        <S w={13} h={13} className="ml-[11px]"><path d="M1 11A11 11 0 0111.500 1" stroke="#999" /><path d="M3.500 12A8.500 8.500 0 0112 4M6 12.500A6.500 6.500 0 0112 7M8.500 12.500A4 4 0 0112 9.500" stroke="#fff" /><circle cx="11.500" cy="12" r="1.200" fill="#fff" /></S>
        <S w={16} h={13} className="ml-[8px]"><path d="M.5 4.500h2l4-3.500v11l-4-3.500h-2z" stroke="#fff" /><path d="M8.500 4.500q1.500 2 0 4" stroke="#fff" /><path d="M10.500 3q3 3.500 0 7M13 1.500q4 5 0 10" stroke="#777" /></S>
        <time className="ml-[11px] w-[49px] text-[11px] whitespace-nowrap">10:07 AM</time>
        <button type="button" aria-label="Notifications" className="ml-[17px]"><S><path d="M0 0h16v13h-5l-3 3-3-3H0z" fill="#fff" /><path d="M3 3.500h10M3 6.500h10M3 9.500h7" stroke="#151413" /></S></button>
        <span className="ml-[20px] h-full w-px bg-[#555]" />
        <span className="w-[4px]" />
      </div>
    </footer>
  );
}

export default function App() {
  return (
    <div className="flex min-h-screen flex-col overflow-x-hidden bg-white font-['Open_Sans','Noto_Sans',sans-serif] text-[12px] leading-4">
      <Header />
      <Ribbon />
      <main className="flex flex-1">
        <NavPane />
        <div className="w-[4px] shrink-0 bg-[#e4e8eb]" />
        <div className="min-w-0 flex-1 border-t-2 border-l-2 border-t-[#777a7d] border-l-[#8f9499]">
          <div className="mr-px h-full border-r border-l border-r-[#e0e0e0] border-l-[#5a5d60] pt-[40px] pb-[2px]">
            <div className="-mr-[2px]"><TableWindow /></div>
          </div>
        </div>
      </main>
      <StatusBar />
      <Taskbar />
    </div>
  );
}
